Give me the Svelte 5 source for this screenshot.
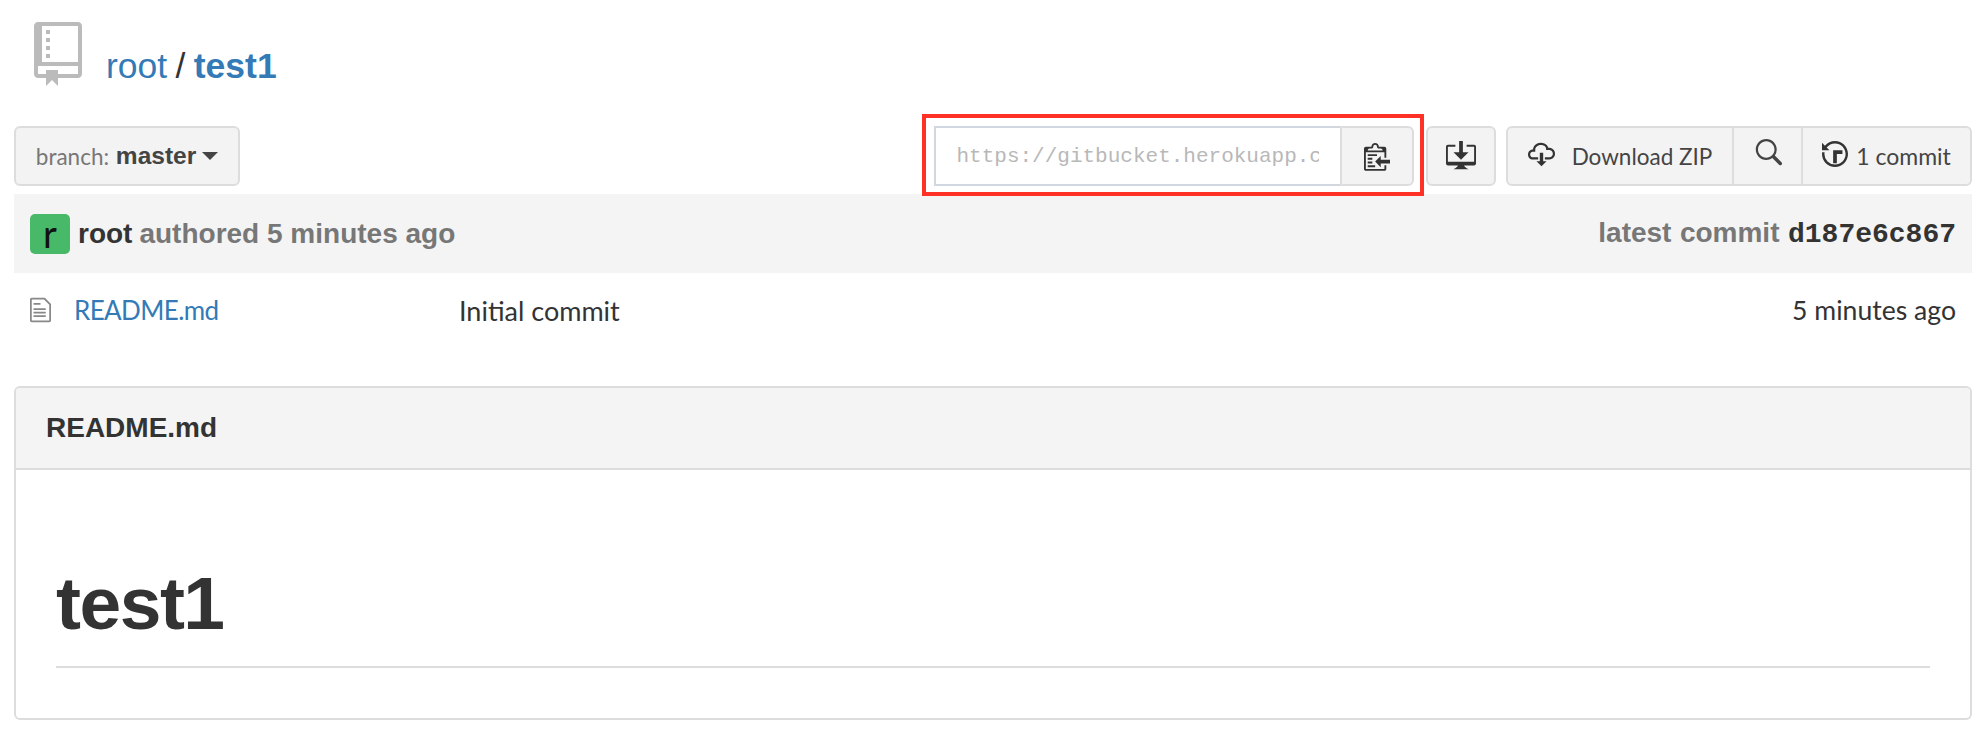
<script>
  const icons = {
    repo: 'M4 9H3V8h1v1zm0-3H3v1h1V6zm0-2H3v1h1V4zm0-2H3v1h1V2zm8-1v12c0 .55-.45 1-1 1H6v2l-1.5-1.5L3 16v-2H1c-.55 0-1-.45-1-1V1c0-.55.45-1 1-1h10c.55 0 1 .45 1 1zm-1 10H1v2h2v-1h3v1h5v-2zm0-10H2v9h9V1z',
    clippy: 'M2 13h4v1H2v-1zm5-6H2v1h5V7zm2 3V8l-3 3 3 3v-2h5v-2H9zM4.5 9H2v1h2.5V9zM2 12h2.5v-1H2v1zm9 1h1v2c-.02.28-.11.52-.3.7-.19.18-.42.28-.7.3H1c-.55 0-1-.45-1-1V4c0-.55.45-1 1-1h3c0-1.11.89-2 2-2 1.11 0 2 .89 2 2h3c.55 0 1 .45 1 1v5h-1V6H1v9h10v-2zM2 5h8c0-.55-.45-1-1-1H8c-.55 0-1-.45-1-1s-.45-1-1-1-1 .45-1 1-.45 1-1 1H3c-.55 0-1 .45-1 1z',
    desktop: 'M4 6h3V0h2v6h3l-4 4-4-4zm11-4h-4v1h4v8H1V3h4V2H1c-.55 0-1 .45-1 1v9c0 .55.45 1 1 1h5.34c-.25.61-.86 1.39-2.34 2h8c-1.48-.61-2.09-1.39-2.34-2H15c.55 0 1-.45 1-1V3c0-.55-.45-1-1-1z',
    cloud: 'M9 12h2l-3 3-3-3h2V7h2v5zm3-8c0-.44-.91-3-4.5-3C5.08 1 3 2.92 3 5 1.02 5 0 6.52 0 8c0 1.53 1 3 3 3h3V9.7H3C1.38 9.7 1.3 8.28 1.3 8c0-.17.05-1.7 1.7-1.7h1.3V5c0-1.39 1.56-2.7 3.2-2.7 2.55 0 3.13 1.55 3.2 1.8v1.2H12c.81 0 2.7.22 2.7 2.2 0 2.09-2.25 2.2-2.7 2.2h-2V11h2c2.08 0 4-1.16 4-3.5C16 5.06 14.08 4 12 4z',
    search: 'M15.7 13.3l-3.81-3.83A5.93 5.93 0 0 0 13 6c0-3.31-2.69-6-6-6S1 2.69 1 6s2.69 6 6 6c1.3 0 2.48-.41 3.47-1.11l3.83 3.81c.19.2.45.3.7.3.25 0 .52-.09.7-.3a.996.996 0 0 0 0-1.41v.01zM7 10.7c-2.59 0-4.7-2.11-4.7-4.7 0-2.59 2.11-4.7 4.7-4.7 2.59 0 4.7 2.11 4.7 4.7 0 2.59-2.11 4.7-4.7 4.7z',
    history: 'M8 13H6V6h5v2H8v5zM7 1C4.81 1 2.87 2.02 1.59 3.59L0 2v4h4L2.5 4.5C3.55 3.17 5.17 2.3 7 2.3c3.14 0 5.7 2.56 5.7 5.7s-2.56 5.7-5.7 5.7A5.71 5.71 0 0 1 1.3 8c0-.34.03-.67.09-1H.08C.03 7.33 0 7.66 0 8c0 3.86 3.14 7 7 7s7-3.14 7-7-3.14-7-7-7z',
    file: 'M6 5H2V4h4v1zM2 8h7V7H2v1zm0 2h7V9H2v1zm0 2h7v-1H2v1zm10-7.5V14c0 .55-.45 1-1 1H1c-.55 0-1-.45-1-1V2c0-.55.45-1 1-1h7.5L12 4.5zM11 5L8 2H1v12h10V5z'
  };
</script>

<div class="page">
  <div class="head">
    <svg class="repo-icon" viewBox="0 0 12 16"><path d={icons.repo} /></svg>
    <div class="title"><a href="#root">root</a> / <a href="#test1" class="strong">test1</a></div>
  </div>

  <div class="toolbar">
    <button class="btn branch">branch: <b>master</b><span class="caret"></span></button>
    <div class="spacer"></div>
    <div class="clone">
      <input class="url" readonly value="https://gitbucket.herokuapp.com/git/root/test1.git" />
      <button class="btn copy"><svg class="ic" viewBox="0 0 14 16"><path d={icons.clippy} /></svg></button>
      <div class="highlight"></div>
    </div>
    <button class="btn desktop"><svg class="ic" viewBox="0 0 16 16"><path d={icons.desktop} /></svg></button>
    <div class="group">
      <button class="btn zip"><svg class="ic" viewBox="0 0 16 16"><path d={icons.cloud} /></svg>Download ZIP</button>
      <button class="btn find"><svg class="ic" viewBox="0 0 16 16"><path d={icons.search} /></svg></button>
      <button class="btn commits"><svg class="ic" viewBox="0 0 14 16"><path d={icons.history} /></svg>1 commit</button>
    </div>
  </div>

  <div class="commit-bar">
    <span class="avatar">r</span>
    <span class="author">root</span>
    <span class="muted">authored 5 minutes ago</span>
    <span class="latest"><span class="muted">latest commit</span> <code>d187e6c867</code></span>
  </div>

  <div class="file-row">
    <svg class="file-icon" viewBox="0 0 12 16"><path d={icons.file} /></svg>
    <a href="#readme" class="file-name">README.md</a>
    <span class="file-msg">Initial commit</span>
    <span class="file-age">5 minutes ago</span>
  </div>

  <section class="panel">
    <div class="panel-head">README.md</div>
    <div class="panel-body">
      <h1>test1</h1>
    </div>
  </section>
</div>

<style>
  :global(body) {
    background: #fff;
    color: #333;
    font-family: Lato, "Noto Sans", sans-serif;
  }

  .page {
    padding: 0 14px;
    height: 740px;
    box-sizing: border-box;
    overflow: hidden;
  }

  a {
    color: #337ab7;
    text-decoration: none;
  }

  .head {
    display: flex;
    align-items: flex-start;
    height: 126px;
    padding: 22px 0 0 20px;
    box-sizing: border-box;
  }

  .repo-icon {
    width: 48px;
    height: 64px;
    fill: #bbb;
    flex: none;
  }

  .title {
    margin: 24px 0 0 24px;
    font-family: "Liberation Sans", sans-serif;
    font-size: 35.5px;
    line-height: 40px;
    word-spacing: -1.5px;
  }

  .strong {
    font-weight: 700;
  }

  .toolbar {
    display: flex;
    height: 60px;
    margin-bottom: 8px;
  }

  .spacer {
    flex: 1;
  }

  .btn {
    display: flex;
    align-items: center;
    justify-content: center;
    height: 60px;
    box-sizing: border-box;
    background: #f3f3f3;
    border: 2px solid #ddd;
    border-radius: 6px;
    color: #444;
    font-family: Lato, "Noto Sans", sans-serif;
    font-size: 23px;
    padding: 0;
  }

  .ic {
    fill: #333;
    flex: none;
  }

  .branch {
    width: 226px;
    color: #777;
    font-size: 22.5px;
    white-space: pre;
  }

  .branch b {
    color: #444;
    margin-left: 1px;
    font-family: "Liberation Sans", sans-serif;
    font-size: 24.5px;
  }

  .caret {
    margin-left: 6px;
    border-top: 8px solid #444;
    border-left: 8px solid transparent;
    border-right: 8px solid transparent;
  }

  .clone {
    position: relative;
    display: flex;
    margin-right: 12px;
  }

  .url {
    width: 406px;
    height: 60px;
    box-sizing: border-box;
    border: 2px solid #d2d6de;
    border-right: none;
    border-radius: 0;
    outline: none;
    padding: 0 21px;
    background: #fff;
    color: #b8b8b8;
    font-family: "Liberation Mono", monospace;
    font-size: 21px;
  }

  .copy {
    width: 74px;
    border-radius: 0 6px 6px 0;
  }

  .copy .ic {
    width: 26px;
    height: 30px;
  }

  .highlight {
    position: absolute;
    inset: -12px -10px -10px -12px;
    border: 4px solid #ff3126;
    pointer-events: none;
  }

  .desktop {
    width: 70px;
    margin-right: 12.5px;
  }

  .desktop .ic {
    width: 30px;
    height: 30px;
  }

  .group {
    display: flex;
  }

  .group .btn {
    border-radius: 0;
    margin-left: -2px;
  }

  .zip {
    width: 228px;
    margin-left: 0;
    gap: 17px;
    font-size: 22.5px;
    border-radius: 6px 0 0 6px !important;
  }

  .zip .ic {
    width: 27px;
    height: 27px;
    margin-bottom: 4px;
  }

  .find {
    width: 71px;
  }

  .find .ic {
    width: 28px;
    height: 28px;
    margin-bottom: 6px;
    fill: #444;
  }

  .commits {
    width: 171px;
    gap: 8px;
    border-radius: 0 6px 6px 0 !important;
  }

  .commits .ic {
    width: 26px;
    height: 30px;
    margin-bottom: 4px;
  }

  .commit-bar {
    display: flex;
    align-items: center;
    height: 79px;
    padding: 0 16px;
    background: #f4f4f4;
    font-family: "Liberation Sans", sans-serif;
    font-weight: 700;
    font-size: 28px;
    white-space: pre;
  }

  .avatar {
    width: 40px;
    height: 40px;
    margin-right: 8px;
    border-radius: 5px;
    background: #48b968;
    color: #111;
    font-family: Lato, sans-serif;
    font-weight: 400;
    font-size: 38px;
    line-height: 38px;
    text-align: center;
  }

  .author {
    color: #333;
    margin-right: 7px;
  }

  .muted {
    color: #777;
  }

  .latest {
    margin-left: auto;
    word-spacing: 0.7px;
  }

  code {
    font-family: "Liberation Mono", monospace;
    font-size: 28px;
    font-weight: 700;
    color: #333;
  }

  .file-row {
    display: flex;
    align-items: center;
    height: 74px;
    padding: 0 16px;
    margin-bottom: 39px;
    font-size: 27px;
  }

  .file-icon {
    width: 21px;
    height: 28px;
    fill: #888;
    flex: none;
  }

  .file-name {
    margin-left: 23px;
    width: 385px;
    font-size: 26px;
    letter-spacing: -0.6px;
  }

  .file-age {
    margin-left: auto;
    font-size: 26.6px;
  }

  .panel {
    border: 2px solid #ddd;
    border-radius: 6px;
    height: 334px;
    box-sizing: border-box;
  }

  .panel-head {
    height: 82px;
    box-sizing: border-box;
    padding-left: 30px;
    display: flex;
    align-items: center;
    background: #f4f4f4;
    border-bottom: 2px solid #ddd;
    border-radius: 4px 4px 0 0;
    font-family: "Liberation Sans", sans-serif;
    font-weight: 700;
    font-size: 28px;
    color: #333;
  }

  .panel-body {
    padding: 0 40px;
  }

  h1 {
    margin: 0;
    padding: 93px 0 23px;
    border-bottom: 2px solid #ddd;
    font-family: "Liberation Sans", sans-serif;
    font-weight: 700;
    font-size: 75px;
    line-height: 80px;
    letter-spacing: -1.5px;
    color: #333;
  }
</style>
